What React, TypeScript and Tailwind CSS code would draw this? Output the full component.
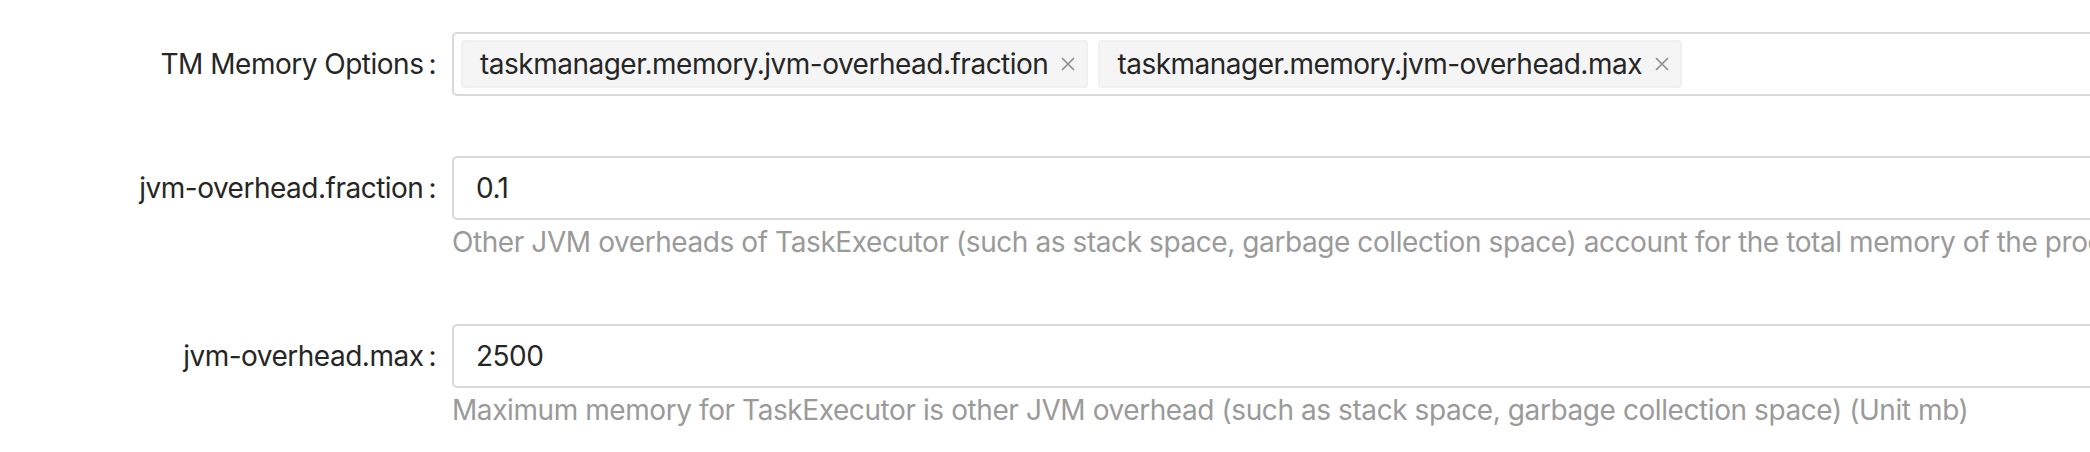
import React from "react";

const CloseIcon = () => (
  <svg width="14" height="14" viewBox="0 0 14 14" className="shrink-0">
    <path d="M1 1 L13 13 M13 1 L1 13" stroke="#8c8c8c" strokeWidth="1.6" fill="none" />
  </svg>
);

const Tag = ({ text }: { text: string }) => (
  <div className="flex items-center h-[48px] rounded-[4px] border-2 border-[#f0f0f0] bg-[#f5f5f5] pl-[17px] pr-[11px] mr-[10px]">
    <span className="leading-[44px] text-[#262626] whitespace-nowrap">{text}</span>
    <span className="ml-[13px] flex items-center">
      <CloseIcon />
    </span>
  </div>
);

const Label = ({ text }: { text: string }) => (
  <div className="w-[452px] shrink-0 h-[64px] flex items-center justify-end pr-[16px] text-[#262626] whitespace-nowrap">
    <span>{text}</span>
    <span className="ml-[5px]">:</span>
  </div>
);

const Input = ({ value }: { value: string }) => (
  <div className="h-[64px] w-full border-2 border-[#d9d9d9] rounded-[5px] flex items-center pl-[22px] text-[#262626]">
    {value}
  </div>
);

const Help = ({ text }: { text: string }) => (
  <div className="leading-[44px] h-[44px] text-[#9a9a9a] whitespace-nowrap tracking-[-0.42px]">{text}</div>
);

export default function App() {
  return (
    <div className="w-[2090px] h-[452px] overflow-hidden bg-white font-['Inter','Noto_Sans',sans-serif] text-[28px] tracking-[-0.5px]">
      <div className="w-[2700px] pt-[32px] flex flex-col">
        <div className="flex">
          <Label text="TM Memory Options" />
          <div className="flex-1">
            <div className="h-[64px] w-full border-2 border-[#d9d9d9] rounded-[5px] flex items-center pl-[7px]">
              <Tag text="taskmanager.memory.jvm-overhead.fraction" />
              <Tag text="taskmanager.memory.jvm-overhead.max" />
            </div>
          </div>
        </div>

        <div className="flex mt-[60px]">
          <Label text="jvm-overhead.fraction" />
          <div className="flex-1">
            <Input value="0.1" />
            <Help text="Other JVM overheads of TaskExecutor (such as stack space, garbage collection space) account for the total memory of the process" />
          </div>
        </div>

        <div className="flex mt-[60px]">
          <Label text="jvm-overhead.max" />
          <div className="flex-1">
            <Input value="2500" />
            <Help text="Maximum memory for TaskExecutor is other JVM overhead (such as stack space, garbage collection space) (Unit mb)" />
          </div>
        </div>
      </div>
    </div>
  );
}
